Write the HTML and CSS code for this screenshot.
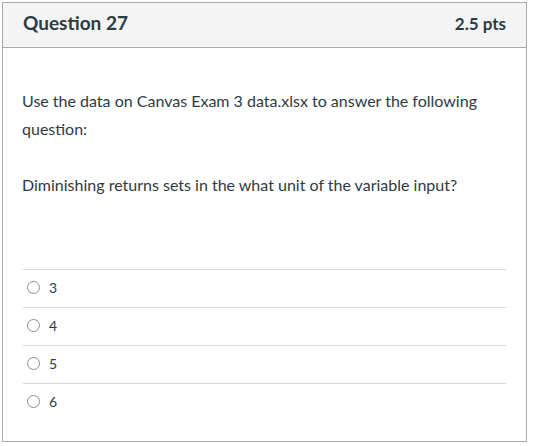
FILE: index.html
```html
<!DOCTYPE html>
<html lang="en">
<head>
  <meta charset="UTF-8" />
  <title>Question 27</title>
  <link rel="stylesheet" href="styles.css">
</head>
<body>
  <div class="questao">
    <div class="cabecalho">
      <h2 class="titulo">Question 27</h2>
      <span class="pontos">2.5 pts</span>
    </div>

    <div class="enunciado">
      <p>Use the data on Canvas Exam 3 data.xlsx to answer the following question:</p>
      <p>Diminishing returns sets in the what unit of the variable input?</p>
    </div>

    <div class="respostas">
      <label class="resposta"><span class="radio"></span>3</label>
      <label class="resposta"><span class="radio"></span>4</label>
      <label class="resposta"><span class="radio"></span>5</label>
      <label class="resposta"><span class="radio"></span>6</label>
    </div>
  </div>
</body>
</html>
```

FILE: styles.css
```css
:root {
  --texto: #2d3b45;
  --borda: #aaaaaa;
  --linha: #d5d9dc;
  --fundo-cabecalho: #f4f4f4;
}
* {
  box-sizing: border-box;
}
body {
  margin: 0;
  font-family: 'Lato', sans-serif;
  color: var(--texto);
  background: white;
}
.questao {
  margin: 2px;
  width: 525px;
  height: 440px;
  border: 1px solid var(--borda);
}
.cabecalho {
  display: flex;
  justify-content: space-between;
  align-items: baseline;
  height: 45px;
  padding: 8px 20px 0 20px;
  background-color: var(--fundo-cabecalho);
  border-bottom: 1px solid var(--borda);
}
.titulo {
  margin: 0;
  font-size: 19px;
  font-weight: 700;
}
.pontos {
  font-size: 17px;
  font-weight: 700;
}
.enunciado {
  padding: 39px 19px 0;
  font-size: 16px;
  line-height: 28px;
}
.enunciado p {
  margin: 0 0 28px;
}
.respostas {
  margin: 70px 20px 0;
}
.resposta {
  display: flex;
  align-items: center;
  gap: 9px;
  height: 38px;
  padding: 0 0 3px 4px;
  border-top: 1px solid var(--linha);
  font-size: 14px;
}
.radio {
  width: 13px;
  height: 13px;
  border: 1px solid #8c8c8c;
  border-radius: 50%;
}
```
